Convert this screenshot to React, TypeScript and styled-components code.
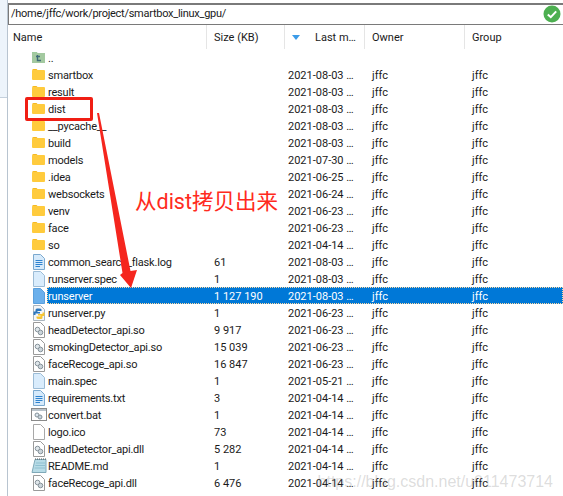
import React from 'react'
import styled, { createGlobalStyle } from 'styled-components'

const GlobalStyle = createGlobalStyle`
	html, body {
		margin: 0;
		padding: 0;
		background: #fff;
	}
`

type IconKind = 'up' | 'folder' | 'text' | 'spec' | 'selected' | 'python' | 'lib' | 'bat' | 'plain' | 'readme'

type FileRow = {
	name: string
	icon: IconKind
	size?: string
	date?: string
}

const files: FileRow[] = [
	{ name: '..', icon: 'up' },
	{ name: 'smartbox', icon: 'folder', date: '08-03' },
	{ name: 'result', icon: 'folder', date: '08-03' },
	{ name: 'dist', icon: 'folder', date: '08-03' },
	{ name: '__pycache__', icon: 'folder', date: '08-03' },
	{ name: 'build', icon: 'folder', date: '08-03' },
	{ name: 'models', icon: 'folder', date: '07-30' },
	{ name: '.idea', icon: 'folder', date: '06-25' },
	{ name: 'websockets', icon: 'folder', date: '06-24' },
	{ name: 'venv', icon: 'folder', date: '06-23' },
	{ name: 'face', icon: 'folder', date: '06-23' },
	{ name: 'so', icon: 'folder', date: '04-14' },
	{ name: 'common_search_flask.log', icon: 'text', size: '61', date: '08-03' },
	{ name: 'runserver.spec', icon: 'spec', size: '1', date: '08-03' },
	{ name: 'runserver', icon: 'selected', size: '1 127 190', date: '08-03' },
	{ name: 'runserver.py', icon: 'python', size: '1', date: '06-23' },
	{ name: 'headDetector_api.so', icon: 'lib', size: '9 917', date: '06-23' },
	{ name: 'smokingDetector_api.so', icon: 'lib', size: '15 039', date: '06-23' },
	{ name: 'faceRecoge_api.so', icon: 'lib', size: '16 847', date: '06-23' },
	{ name: 'main.spec', icon: 'spec', size: '1', date: '05-21' },
	{ name: 'requirements.txt', icon: 'text', size: '3', date: '04-14' },
	{ name: 'convert.bat', icon: 'bat', size: '1', date: '04-14' },
	{ name: 'logo.ico', icon: 'plain', size: '73', date: '04-14' },
	{ name: 'headDetector_api.dll', icon: 'lib', size: '5 282', date: '04-14' },
	{ name: 'README.md', icon: 'readme', size: '1', date: '04-14' },
	{ name: 'faceRecoge_api.dll', icon: 'lib', size: '6 476', date: '04-14' },
]

const docOutline = 'M2.5 .5H9.5L13.5 4.5V15.5H2.5Z'

function FileIcon({ kind }: { kind: IconKind }) {
	if (kind === 'up') {
		return (
			<svg width="16" height="16" viewBox="0 0 16 16">
				<path d="M1 3.5V2.5H6L7 3.5Z" fill="#3c9a3c" />
				<rect x="1" y="3" width="13" height="10" fill="#a3c9a0" />
				<path d="M6.5 5V10.5H10M5 6.5H9" stroke="#3f6b78" strokeWidth="1.4" fill="none" />
			</svg>
		)
	}
	if (kind === 'folder') {
		return (
			<svg width="16" height="16" viewBox="0 0 16 16">
				<path d="M1 3.5Q1 2 2.5 2H5.5L7 3.5Z" fill="#f5b921" />
				<rect x="1" y="3" width="13" height="10" rx="1" fill="#ffcb3d" />
			</svg>
		)
	}
	if (kind === 'text') {
		return (
			<svg width="16" height="16" viewBox="0 0 16 16">
				<path d={docOutline} fill="#d6eafb" stroke="#7ba9cf" />
				<path d="M4.5 6.5H11.5M4.5 8.5H11.5M4.5 10.5H11.5M4.5 12.5H9" stroke="#2f83cf" />
			</svg>
		)
	}
	if (kind === 'spec') {
		return (
			<svg width="16" height="16" viewBox="0 0 16 16">
				<path d={docOutline} fill="#d9ecfc" stroke="#9cbcd6" />
			</svg>
		)
	}
	if (kind === 'selected') {
		return (
			<svg width="16" height="16" viewBox="0 0 16 16">
				<path d={docOutline} fill="#6bb0ec" stroke="#5a9fdc" />
			</svg>
		)
	}
	if (kind === 'python') {
		return (
			<svg width="16" height="16" viewBox="0 0 16 16">
				<path d={docOutline} fill="#f4f6f8" stroke="#a9b4be" />
				<path d="M8 3.5H6Q4.5 3.5 4.5 5V6.5H2.5V10H4.5V8.5H9V7H6.5V6H10.5V4.5Q10.5 3.5 8 3.5Z" fill="#2f78bd" />
				<path d="M8 14H10Q11.5 14 11.5 12.5V11H13.5V7.5H11.5V9H7V10.5H9.5V11.5H5.5V13Q5.5 14 8 14Z" fill="#f7c533" />
			</svg>
		)
	}
	if (kind === 'lib') {
		return (
			<svg width="16" height="16" viewBox="0 0 16 16">
				<path d={docOutline} fill="#fff" stroke="#9a9a9a" />
				<circle cx="6.5" cy="7.5" r="2.3" fill="#dfe6ea" stroke="#86929a" />
				<circle cx="9.5" cy="10.5" r="2.3" fill="#cbd5db" stroke="#86929a" />
			</svg>
		)
	}
	if (kind === 'bat') {
		return (
			<svg width="18" height="16" viewBox="0 0 18 16">
				<rect x=".5" y="1.5" width="15" height="12" fill="#fff" stroke="#8a8a8a" />
				<rect x="1" y="2" width="14" height="2" fill="#b9c3cb" />
				<circle cx="6" cy="8" r="2" fill="#dbe6ee" stroke="#86929a" />
				<circle cx="9" cy="10" r="2" fill="#c5d3dc" stroke="#86929a" />
			</svg>
		)
	}
	if (kind === 'plain') {
		return (
			<svg width="16" height="16" viewBox="0 0 16 16">
				<path d={docOutline} fill="#fff" stroke="#a8a8a8" />
			</svg>
		)
	}
	return (
		<svg width="18" height="16" viewBox="0 0 18 16">
			<path d="M4 1.5H15V14.5H1Z" fill="#b7dbe6" stroke="#7fa9b8" />
			<path d="M4 1H15" stroke="#555" strokeDasharray="1 1" />
			<path d="M5 5H14M4.3 7.5H14M3.6 10H14" stroke="#8fc0d0" />
		</svg>
	)
}

function App() {
	return (
		<Page>
			<GlobalStyle />
			<Sidebar>
				<SidebarPanel />
			</Sidebar>
			<Main>
				<PathBar>
					<PathText>/home/jffc/work/project/smartbox_linux_gpu/</PathText>
					<svg width="18" height="18" viewBox="0 0 18 18">
						<circle cx="9" cy="9" r="8.5" fill="#4caf50" />
						<path d="M4.8 9.4L7.8 12.2L13.2 6.4" fill="none" stroke="#fff" strokeWidth="2" />
					</svg>
				</PathBar>
				<Header>
					<NameHeader>Name</NameHeader>
					<HeaderCell $width={78}>Size (KB)</HeaderCell>
					<SortCell>
						<svg width="8" height="5" viewBox="0 0 8 5">
							<path d="M0 0H8L4 5Z" fill="#3b9be8" />
						</svg>
						<span>Last m…</span>
					</SortCell>
					<HeaderCell $width={100}>Owner</HeaderCell>
					<LastHeaderCell>Group</LastHeaderCell>
				</Header>
				<List>
					{files.map((file) => (
						<Row key={file.name}>
							<IconSlot>
								<FileIcon kind={file.icon} />
							</IconSlot>
							<Cells $selected={file.icon === 'selected'}>
								<NameCell>{file.name}</NameCell>
								<Cell>{file.size}</Cell>
								<Cell>{file.date && `2021-${file.date} …`}</Cell>
								<Cell>{file.date && 'jffc'}</Cell>
								<Cell>{file.date && 'jffc'}</Cell>
							</Cells>
						</Row>
					))}
				</List>
			</Main>
			<RedBox />
			<Arrow width="563" height="496" viewBox="0 0 563 496">
				<path d="M97 113L99 113L130.5 271L137 270L131 288L120 275L122.5 273Z" fill="#f5261e" />
			</Arrow>
			<Note>从dist拷贝出来</Note>
			<Watermark>https://blog.csdn.net/u011473714</Watermark>
		</Page>
	)
}

const Page = styled.div`
	position: relative;
	display: flex;
	width: 563px;
	height: 496px;
	overflow: hidden;
	background: #fff;
	font-family: Roboto, 'Noto Sans CJK SC', sans-serif;
	font-size: 11px;
	color: #1a1a1a;
`

const Sidebar = styled.div`
	width: 7px;
	flex-shrink: 0;
	border-right: 1px solid #b8c4d0;
`

const SidebarPanel = styled.div`
	height: 97px;
	background: #edf4fb;
	border-bottom: 1px solid #c4d0dc;
`

const Main = styled.div`
	flex: 1;
	min-width: 0;
	display: flex;
	flex-direction: column;
	padding-top: 3px;
`

const PathBar = styled.div`
	height: 18px;
	display: flex;
	align-items: center;
	justify-content: space-between;
	padding: 0 2px 1px;
	border: 1px solid #7a7a7a;
	border-top-width: 2px;
	border-right: 0;
`

const PathText = styled.span`
	margin-top: -1px;
	letter-spacing: -0.27px;
`

const Header = styled.div`
	height: 24px;
	display: flex;
	padding-left: 5px;
`

const NameHeader = styled.div`
	width: 194px;
	flex-shrink: 0;
	box-sizing: border-box;
	display: flex;
	align-items: center;
	border-right: 1px solid #e5e5e5;
`

const HeaderCell = styled('div')<{ $width: number }>`
	width: ${(props) => props.$width}px;
	flex-shrink: 0;
	box-sizing: border-box;
	display: flex;
	align-items: center;
	padding-left: 7px;
	border-right: 1px solid #e5e5e5;
`

const SortCell = styled.div`
	width: 80px;
	flex-shrink: 0;
	box-sizing: border-box;
	display: flex;
	align-items: center;
	gap: 15px;
	padding-left: 7px;
	border-right: 1px solid #e5e5e5;
`

const LastHeaderCell = styled.div`
	display: flex;
	align-items: center;
	padding-left: 7px;
`

const List = styled.div`
	display: flex;
	flex-direction: column;
`

const Row = styled.div`
	display: flex;
	height: 17px;
	padding-left: 22px;
`

const IconSlot = styled.div`
	width: 17px;
	flex-shrink: 0;
	box-sizing: border-box;
	padding-left: 1px;
	display: flex;
	align-items: center;

	svg {
		flex-shrink: 0;
	}
`

const Cells = styled('div')<{ $selected?: boolean }>`
	flex: 1;
	display: grid;
	grid-template-columns: 166px 74px 84px 100px 1fr;
	align-items: center;
	background: ${(props) => (props.$selected ? '#0078d7' : 'transparent')};
	color: ${(props) => (props.$selected ? '#fff' : 'inherit')};
	outline: ${(props) => (props.$selected ? '1px dotted #ffd9a0' : 'none')};
	outline-offset: -1px;
`

const Cell = styled.div`
	padding: 2px 0 0 1px;
	white-space: nowrap;
`

const NameCell = styled(Cell)`
	letter-spacing: -0.2px;
`

const RedBox = styled.div`
	position: absolute;
	left: 25px;
	top: 97px;
	width: 62px;
	height: 18px;
	border: 3px solid #f01e14;
	border-radius: 2px;
`

const Arrow = styled.svg`
	position: absolute;
	left: 0;
	top: 0;
	pointer-events: none;
`

const Note = styled.div`
	position: absolute;
	left: 135px;
	top: 188px;
	font-size: 21.5px;
	line-height: 28px;
	color: #ff2a20;
	white-space: nowrap;
`

const Watermark = styled.div`
	position: absolute;
	right: 10px;
	bottom: 5px;
	font-family: 'Liberation Sans', sans-serif;
	font-size: 16px;
	color: rgba(140, 140, 140, 0.3);
	white-space: nowrap;
`

export default App
